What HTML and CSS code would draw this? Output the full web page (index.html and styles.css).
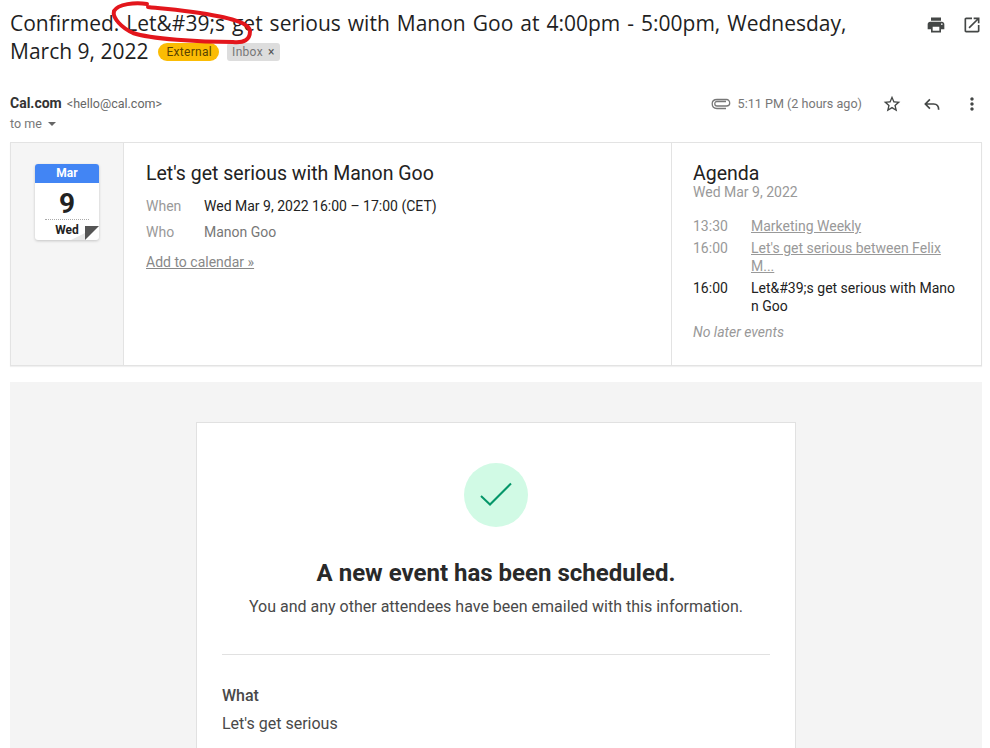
FILE: index.html
```html
<!DOCTYPE html>
<html lang="en">
<head>
    <meta charset="UTF-8">
    <title>Confirmed: Let&amp;#39;s get serious with Manon Goo</title>
    <link rel="stylesheet" href="styles.css">
</head>
<body>
    <div class="subject-row">
        <div>
            <h1 class="subject">Confirmed: Let&amp;#39;s get serious with Manon Goo at 4:00pm - 5:00pm, Wednesday,</h1>
            <div class="subject-end">
                <span class="subject-date">March 9, 2022</span>
                <span class="tag tag-external">External</span>
                <span class="tag tag-inbox">Inbox<span class="tag-x">×</span></span>
            </div>
        </div>
        <div class="subject-icons">
            <svg class="icon" viewBox="0 0 24 24"><path fill="#444746" d="M19 8H5c-1.66 0-3 1.34-3 3v6h4v4h12v-4h4v-6c0-1.66-1.34-3-3-3zm-3 11H8v-5h8v5zm3-7c-.55 0-1-.45-1-1s.45-1 1-1 1 .45 1 1-.45 1-1 1zm-1-9H6v4h12V3z"/></svg>
            <svg class="icon" viewBox="0 0 24 24"><path fill="#444746" d="M19 19H5V5h7V3H5c-1.11 0-2 .9-2 2v14c0 1.1.89 2 2 2h14c1.1 0 2-.9 2-2v-7h-2v7zM14 3v2h3.59l-9.83 9.83 1.41 1.41L19 6.41V10h2V3h-7z"/></svg>
        </div>
    </div>

    <svg class="scribble" viewBox="0 0 270 50"><path d="M147 4C135 2 118 4 114 11C112 18 122 28 133 33C150 39 200 42 233 42C244 43 250 40 250 31C249 24 238 19 200 13C180 10 165 9 148 7" fill="none" stroke="#e3161c" stroke-width="4" stroke-linecap="round"/></svg>

    <div class="sender-row">
        <div>
            <div class="sender"><b>Cal.com</b> <span class="sender-mail">&lt;hello@cal.com&gt;</span></div>
            <div class="to-me">to me <span class="caret"></span></div>
        </div>
        <div class="sender-meta">
            <svg class="clip" viewBox="0 0 20 12"><path d="M15 3.500H6C4.500 3.500 3.800 4.500 3.800 5.700S4.700 8 6 8H15.500C17.500 8 18.700 7 18.700 5.200S17.500 1.500 15.500 1.500H6C3 1.500 1.200 3.200 1.200 5.800S3 10.500 6 10.500H15" fill="none" stroke="#777" stroke-width="1.300"/></svg>
            <span class="sent-time">5:11 PM (2 hours ago)</span>
            <svg class="icon star" viewBox="0 0 24 24"><path fill="#444746" d="M22 9.24l-7.19-.62L12 2 9.19 8.63 2 9.24l5.46 4.73L5.82 21 12 17.27 18.18 21l-1.63-7.03L22 9.24zM12 15.4l-3.76 2.27 1-4.28-3.32-2.88 4.38-.38L12 6.1l1.71 4.04 4.38.38-3.32 2.88 1 4.28L12 15.4z"/></svg>
            <svg class="icon" viewBox="0 0 24 24"><path d="M9.500 6.500L4 12L9.500 17.500M4 12H14C18 12 20 15 20 19" fill="none" stroke="#444746" stroke-width="2"/></svg>
            <svg class="icon" viewBox="0 0 24 24"><path fill="#444746" d="M12 8c1.100 0 2-.9 2-2s-.9-2-2-2-2 .9-2 2 .9 2 2 2zm0 2c-1.100 0-2 .9-2 2s.9 2 2 2 2-.9 2-2-.9-2-2-2zm0 6c-1.100 0-2 .9-2 2s.9 2 2 2 2-.9 2-2-.9-2-2-2z"/></svg>
        </div>
    </div>

    <div class="invite">
        <div class="invite-date">
            <div class="cal">
                <div class="cal-month">Mar</div>
                <div class="cal-day">9</div>
                <div class="cal-week">Wed</div>
                <div class="cal-fold"></div>
            </div>
        </div>
        <div class="invite-main">
            <div class="invite-title">Let's get serious with Manon Goo</div>
            <div class="invite-line"><span class="invite-label">When</span><span class="invite-value">Wed Mar 9, 2022 16:00 – 17:00 (CET)</span></div>
            <div class="invite-line"><span class="invite-label">Who</span><span class="invite-who">Manon Goo</span></div>
            <a class="add-cal" href="#">Add to calendar »</a>
        </div>
        <div class="agenda">
            <div class="agenda-title">Agenda</div>
            <div class="agenda-date">Wed Mar 9, 2022</div>
            <div class="agenda-list">
                <div class="agenda-item"><span class="agenda-time">13:30</span><a href="#">Marketing Weekly</a></div>
                <div class="agenda-item"><span class="agenda-time">16:00</span><a href="#">Let's get serious between Felix M...</a></div>
                <div class="agenda-item current"><span class="agenda-time">16:00</span><span class="agenda-name">Let&amp;#39;s get serious with Mano<br>n Goo</span></div>
            </div>
            <div class="agenda-end">No later events</div>
        </div>
    </div>

    <div class="mail-body">
        <div class="mail-card">
            <div class="check-circle">
                <svg viewBox="0 0 32 32" width="32" height="32"><path d="M1 17L10 25.500L31 4.500" fill="none" stroke="#059669" stroke-width="2"/></svg>
            </div>
            <h2 class="mail-heading">A new event has been scheduled.</h2>
            <p class="mail-sub">You and any other attendees have been emailed with this information.</p>
            <hr class="mail-rule">
            <div class="mail-label">What</div>
            <div class="mail-value">Let's get serious</div>
        </div>
    </div>
</body>
</html>
```

FILE: styles.css
```css
html, body {
    height: 748px;
    overflow: hidden;
}
body {
    margin: 0;
    padding: 0 8px 0 10px;
    position: relative;
    background: white;
    font-family: Roboto, "Liberation Sans", sans-serif;
    color: #222;
}
.subject-row {
    display: flex;
    justify-content: space-between;
    padding-top: 9px;
}
.subject {
    margin: 0;
    font-family: "Open Sans", sans-serif;
    font-size: 21px;
    font-weight: 400;
    line-height: 28px;
    word-spacing: 1.55px;
    color: #1f1f1f;
}
.subject-end {
    display: flex;
    align-items: center;
    height: 28px;
}
.subject-date {
    font-family: "Open Sans", sans-serif;
    font-size: 21px;
    color: #1f1f1f;
}
.tag {
    margin-top: 2px;
    font-size: 12px;
    line-height: 18px;
    height: 18px;
    letter-spacing: 0.3px;
}
.tag-external {
    margin-left: 10px;
    padding: 0 7px 0 8px;
    border-radius: 9px;
    background: #fbbc04;
    color: #594300;
}
.tag-inbox {
    margin-left: 8px;
    padding: 0 5px;
    border-radius: 3px;
    background: #ddd;
    color: #777;
}
.tag-x {
    margin-left: 5px;
    color: #555;
}
.subject-icons {
    display: flex;
    gap: 16px;
    padding-top: 6px;
}
.icon {
    width: 20px;
    height: 20px;
}
.scribble {
    position: absolute;
    left: 0;
    top: 0;
    width: 270px;
    height: 50px;
}
.sender-row {
    display: flex;
    justify-content: space-between;
    margin-top: 28px;
}
.sender {
    font-size: 12.5px;
    line-height: 20px;
    color: #666;
}
.sender b {
    font-size: 14px;
    color: #333;
}
.sender-mail {
    margin-left: 2px;
}
.to-me {
    font-size: 12.5px;
    line-height: 20px;
    color: #777;
}
.caret {
    display: inline-block;
    width: 0;
    height: 0;
    margin-left: 3px;
    vertical-align: 2px;
    border-left: 4px solid transparent;
    border-right: 4px solid transparent;
    border-top: 4px solid #666;
}
.sender-meta {
    display: flex;
    align-items: flex-start;
    gap: 20px;
    padding-top: 1px;
}
.clip {
    width: 20px;
    height: 12px;
    margin: 4px -13px 0 0;
}
.sent-time {
    font-size: 12.6px;
    line-height: 20px;
    color: #777;
}
.invite {
    display: flex;
    width: 970px;
    height: 222px;
    margin-top: 8px;
    border: 1px solid #e3e3e3;
    box-shadow: 0 1px 1px rgba(0,0,0,0.06);
}
.invite-date {
    flex: none;
    width: 113px;
    padding-top: 21px;
    background: #f5f5f5;
    border-right: 1px solid #e3e3e3;
    box-sizing: border-box;
}
.cal {
    position: relative;
    width: 64px;
    height: 76px;
    margin-left: 24px;
    border-radius: 3px;
    background: white;
    box-shadow: 0 1px 3px rgba(0,0,0,0.2);
    text-align: center;
    overflow: hidden;
}
.cal::after {
    content: "";
    position: absolute;
    right: 14px;
    bottom: 0;
    border-style: solid;
    border-width: 0 0 7px 14px;
    border-color: transparent transparent #e8e8e8 transparent;
}
.cal-month {
    height: 19px;
    background: #4285f4;
    color: white;
    font-size: 12px;
    font-weight: 700;
    line-height: 19px;
}
.cal-day {
    height: 36px;
    margin: 0 10px;
    border-bottom: 1px dotted #aaa;
    color: #222;
    font-size: 28px;
    font-weight: 700;
    line-height: 42px;
}
.cal-week {
    color: #222;
    font-size: 12px;
    font-weight: 700;
    line-height: 21px;
}
.cal-fold {
    position: absolute;
    right: 0;
    bottom: 0;
    width: 0;
    height: 0;
    border-style: solid;
    border-width: 14px 14px 0 0;
    border-color: #555 transparent transparent transparent;
}
.invite-main {
    flex: none;
    width: 548px;
    padding: 18px 22px 0;
    box-sizing: border-box;
    border-right: 1px solid #e3e3e3;
}
.invite-title {
    font-size: 19.5px;
    line-height: 26px;
    margin-bottom: 6px;
    color: #222;
}
.invite-line {
    display: flex;
    font-size: 14px;
    line-height: 26px;
}
.invite-label {
    width: 58px;
    color: #999;
}
.invite-who {
    color: #777;
}
.add-cal {
    display: block;
    margin-top: 4px;
    font-size: 14px;
    line-height: 26px;
    color: #888;
}
.agenda {
    flex: 1;
    padding: 19px 22px 0 21px;
}
.agenda-title {
    font-size: 19.5px;
    line-height: 23px;
}
.agenda-date {
    font-size: 14px;
    line-height: 14px;
    color: #999;
}
.agenda-list {
    margin-top: 16px;
}
.agenda-item {
    display: flex;
    font-size: 14px;
    line-height: 18px;
    padding: 2px 0;
    color: #999;
}
.agenda-item a {
    color: #999;
}
.agenda-time {
    flex: none;
    width: 58px;
}
.current {
    color: #222;
}
.agenda-end {
    margin-top: 6px;
    font-size: 14px;
    font-style: italic;
    line-height: 18px;
    color: #999;
}
.mail-body {
    width: 972px;
    height: 400px;
    margin-top: 16px;
    padding-top: 40px;
    box-sizing: border-box;
    background: #f4f4f4;
}
.mail-card {
    width: 600px;
    margin: 0 auto;
    padding: 40px 25px;
    box-sizing: border-box;
    background: white;
    border: 1px solid #e1e1e1;
    text-align: center;
}
.check-circle {
    display: flex;
    align-items: center;
    justify-content: center;
    width: 64px;
    height: 64px;
    margin: 0 auto;
    border-radius: 50%;
    background: #d1fae5;
}
.mail-heading {
    margin: 30px 0 0;
    font-size: 24px;
    font-weight: 700;
    line-height: 32px;
    color: #292929;
}
.mail-sub {
    margin: 6px 0 0;
    font-size: 16px;
    line-height: 24px;
    color: #494949;
}
.mail-rule {
    margin: 35px 0 0;
    border: 0;
    border-top: 1px solid #e1e1e1;
}
.mail-label {
    margin-top: 29px;
    text-align: left;
    font-size: 16px;
    font-weight: 500;
    line-height: 24px;
    color: #494949;
}
.mail-value {
    margin-top: 4px;
    text-align: left;
    font-size: 16px;
    line-height: 24px;
    color: #494949;
}
```
